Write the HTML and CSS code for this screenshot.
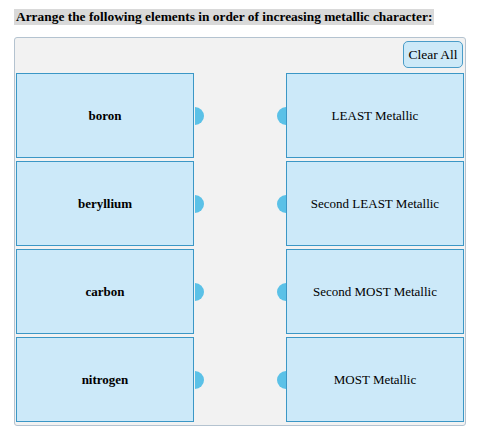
FILE: index.html
```html
<!DOCTYPE html>
<html lang="en">
<head>
	<meta charset="UTF-8">
	<meta name="viewport" content="width=device-width, initial-scale=1.0">
	<title>Metallic Character Matching</title>
	<link rel="stylesheet" href="styles.css">
</head>
<body>
	<div id="wrapper">
		<div class="prompt">Arrange the following elements in order of increasing metallic character:</div>
		<div id="board">
			<div class="toolbar">
				<button type="button" class="clear-btn">Clear All</button>
			</div>
			<div class="match-row">
				<div class="item source"><b>boron</b></div>
				<span class="dot dot-out"></span>
				<span class="spacer"></span>
				<span class="dot dot-in"></span>
				<div class="item target">LEAST Metallic</div>
			</div>
			<div class="match-row">
				<div class="item source"><b>beryllium</b></div>
				<span class="dot dot-out"></span>
				<span class="spacer"></span>
				<span class="dot dot-in"></span>
				<div class="item target">Second LEAST Metallic</div>
			</div>
			<div class="match-row">
				<div class="item source"><b>carbon</b></div>
				<span class="dot dot-out"></span>
				<span class="spacer"></span>
				<span class="dot dot-in"></span>
				<div class="item target">Second MOST Metallic</div>
			</div>
			<div class="match-row">
				<div class="item source"><b>nitrogen</b></div>
				<span class="dot dot-out"></span>
				<span class="spacer"></span>
				<span class="dot dot-in"></span>
				<div class="item target">MOST Metallic</div>
			</div>
		</div>
	</div>
</body>
</html>
```

FILE: styles.css
```css
body {
	margin: 0;
	padding: 0;
	background: #fff;
	font-family: "Liberation Serif", "Times New Roman", serif;
	color: #000;
}
#wrapper {
	padding: 7px 0 0 14px;
	width: 452px;
}

.prompt {
	display: inline-block;
	background: #d9d9d9;
	font-weight: bold;
	font-size: 13.4px;
	line-height: 16px;
	padding: 0 2px;
}

#board {
	margin-top: 12px;
	background: #f2f2f2;
	border: 1px solid #b4c3d0;
	border-radius: 3px;
	padding: 3px 1px 3px 1px;
	display: flex;
	flex-direction: column;
	gap: 3px;
}

.toolbar {
	display: flex;
	justify-content: flex-end;
	padding-right: 1px;
	margin-bottom: 2px;
}
.clear-btn {
	font-family: "Liberation Serif", "Times New Roman", serif;
	font-size: 13.5px;
	color: #000;
	background: #cce9f8;
	border: 1px solid #4a9cc8;
	border-radius: 5px;
	height: 27px;
	width: 60px;
	padding: 0;
	cursor: pointer;
}

.match-row {
	display: flex;
	align-items: center;
}
.item {
	box-sizing: border-box;
	width: 178px;
	height: 85px;
	background: #cce9f9;
	border: 1px solid #3b97c6;
	display: flex;
	align-items: center;
	justify-content: center;
	font-size: 13px;
	text-align: center;
}
.spacer {
	flex: 1;
}
.dot {
	width: 9px;
	height: 18px;
	background: #5bc1e7;
}
.dot-out {
	margin-left: 1px;
	border-radius: 0 9px 9px 0;
}
.dot-in {
	border-radius: 9px 0 0 9px;
}
```
